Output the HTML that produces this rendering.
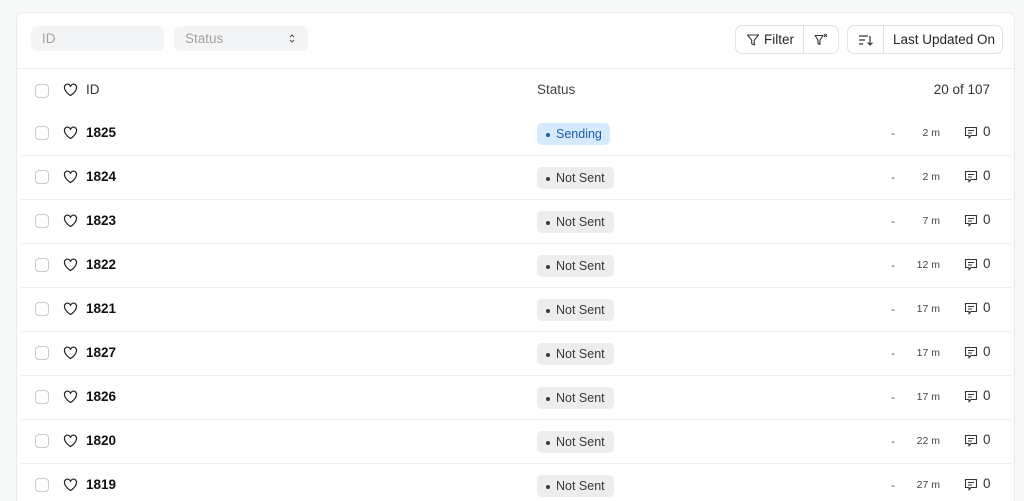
<!DOCTYPE html>
<html style="width:1024px;height:501px;overflow:hidden"><head><meta charset="utf-8"><style>
*{box-sizing:border-box;margin:0;padding:0}
body{width:1024px;height:501px;overflow:hidden;background:#f7f8f8;font-family:"Liberation Sans",sans-serif;color:#1f1f1f;position:relative}
.card{position:absolute;left:16px;top:12px;width:999px;height:489px;background:#fff;border:1px solid #ebebeb;border-bottom:none;border-radius:8px 8px 0 0}
.abs{position:absolute}
.inp{position:absolute;top:26px;height:25px;background:#f3f4f6;border-radius:6px;color:#a3a3a3;font-size:13.5px;line-height:25px;padding-left:11px}
.btn{position:absolute;top:25px;height:29px;border:1px solid #e2e2e2;border-radius:7px;background:#fff;font-size:13.5px;line-height:27px;color:#262626}
.cb{position:absolute;left:35px;width:14px;height:14px;border:1px solid #c9c9c9;border-radius:4px;background:#fff}
.sep{position:absolute;left:20px;width:992px;height:1px;background:#efefef}
.id{position:absolute;left:86px;font-size:13.5px;font-weight:bold;color:#111}
.badge{position:absolute;left:537px;height:22px;border-radius:5px;font-size:12.5px;line-height:22px;padding:0 9px 0 19px}
.badge:before{content:"";position:absolute;left:9px;top:9.5px;width:4px;height:4px;border-radius:50%;background:currentColor}
.ns{background:#ebedef;color:#3a3a3a;width:77px}
.sd{background:#d5eafd;color:#1c5ea8;width:73px}
.dash{position:absolute;left:891px;font-size:12px;color:#555}
.tm{position:absolute;right:84px;font-size:10.5px;color:#444}
.cm{position:absolute;left:964px}
.zero{position:absolute;left:983px;font-size:13.5px;color:#333}
</style></head><body>
<div class="card"></div>
<div class="inp" style="left:31px;width:133px">ID</div>
<div class="inp" style="left:174px;width:134px">Status
<svg class="abs" style="left:114px;top:7px" width="8" height="11" viewBox="0 0 8 11"><path d="M2 4L4 2L6 4M2 7L4 9L6 7" fill="none" stroke="#555" stroke-width="1.1"/></svg></div>

<div class="btn" style="left:735px;width:104px">
<svg class="abs" style="left:10px;top:7px" width="14" height="14" viewBox="0 0 14 14"><path d="M1.5 2h11L8.3 7.2V12l-2.6-1.3V7.2z" fill="none" stroke="#333" stroke-width="1.1" stroke-linejoin="round"/></svg>
<span class="abs" style="left:28px;top:0">Filter</span>
<div class="abs" style="left:67px;top:0;width:1px;height:27px;background:#e2e2e2"></div>
<svg class="abs" style="left:78px;top:7px" width="14" height="14" viewBox="0 0 14 14"><path d="M1 2.5h8L6 7v4.5l-2-1V7z" fill="none" stroke="#333" stroke-width="1.1" stroke-linejoin="round"/><path d="M10 1l3 3M13 1l-3 3" stroke="#333" stroke-width="1"/></svg>
</div>
<div class="btn" style="left:847px;width:156px">
<svg class="abs" style="left:10px;top:7px" width="16" height="14" viewBox="0 0 16 14"><path d="M1 3h9M1 7h6M1 11h4" stroke="#333" stroke-width="1.2"/><path d="M12 3v9M9.5 9.5L12 12l2.5-2.5" fill="none" stroke="#333" stroke-width="1.2"/></svg>
<div class="abs" style="left:35px;top:0;width:1px;height:27px;background:#e2e2e2"></div>
<span class="abs" style="left:45px;top:0">Last Updated On</span>
</div>
<div class="abs" style="left:17px;top:68px;width:997px;height:1px;background:#efefef"></div>

<div class="cb" style="top:84px"></div>
<svg class="abs" style="left:63px;top:83px" width="15" height="14" viewBox="0 0 15 14"><path d="M7.5 12.5S1.5 8.8 1.5 4.8A3 3 0 0 1 7.5 3.5a3 3 0 0 1 6 1.3c0 4-6 7.7-6 7.7z" fill="none" stroke="#222" stroke-width="1.2" stroke-linejoin="round"/></svg>
<div class="abs" style="left:86px;top:82px;font-size:13.5px;color:#333">ID</div>
<div class="abs" style="left:537px;top:82px;font-size:13.5px;color:#444">Status</div>
<div class="abs" style="right:34px;top:82px;font-size:13.5px;color:#333">20 of 107</div>

<div id="rows"></div>
<script>
var d=[["1825",1,"2 m"],["1824",0,"2 m"],["1823",0,"7 m"],["1822",0,"12 m"],["1821",0,"17 m"],["1827",0,"17 m"],["1826",0,"17 m"],["1820",0,"22 m"],["1819",0,"27 m"]];
var h="";
d.forEach(function(r,i){var c=133+44*i;
h+='<div class="cb" style="top:'+(c-7)+'px"></div>';
h+='<svg class="abs" style="left:63px;top:'+(c-7)+'px" width="15" height="14" viewBox="0 0 15 14"><path d="M7.5 12.5S1.5 8.8 1.5 4.8A3 3 0 0 1 7.5 3.5a3 3 0 0 1 6 1.3c0 4-6 7.7-6 7.7z" fill="none" stroke="#222" stroke-width="1.2" stroke-linejoin="round"/></svg>';
h+='<div class="id" style="top:'+(c-8)+'px">'+r[0]+'</div>';
h+='<div class="badge '+(r[1]?'sd':'ns')+'" style="top:'+(c-10)+'px">'+(r[1]?'Sending':'Not Sent')+'</div>';
h+='<div class="dash" style="top:'+(c-7)+'px">-</div>';
h+='<div class="tm" style="top:'+(c-6)+'px">'+r[2]+'</div>';
h+='<svg class="cm" style="top:'+(c-7)+'px" width="14" height="14" viewBox="0 0 14 14"><path d="M1.5 1.5h11v8H7l-2 2.5v-2.5H1.5z" fill="none" stroke="#333" stroke-width="1.1" stroke-linejoin="round"/><path d="M4 4.5h6M4 7h4" stroke="#333" stroke-width="1"/></svg>';
h+='<div class="zero" style="top:'+(c-9)+'px">0</div>';
if(i<8)h+='<div class="sep" style="top:'+(c+22)+'px"></div>';
});
document.getElementById("rows").innerHTML=h;
</script>
</body></html>
